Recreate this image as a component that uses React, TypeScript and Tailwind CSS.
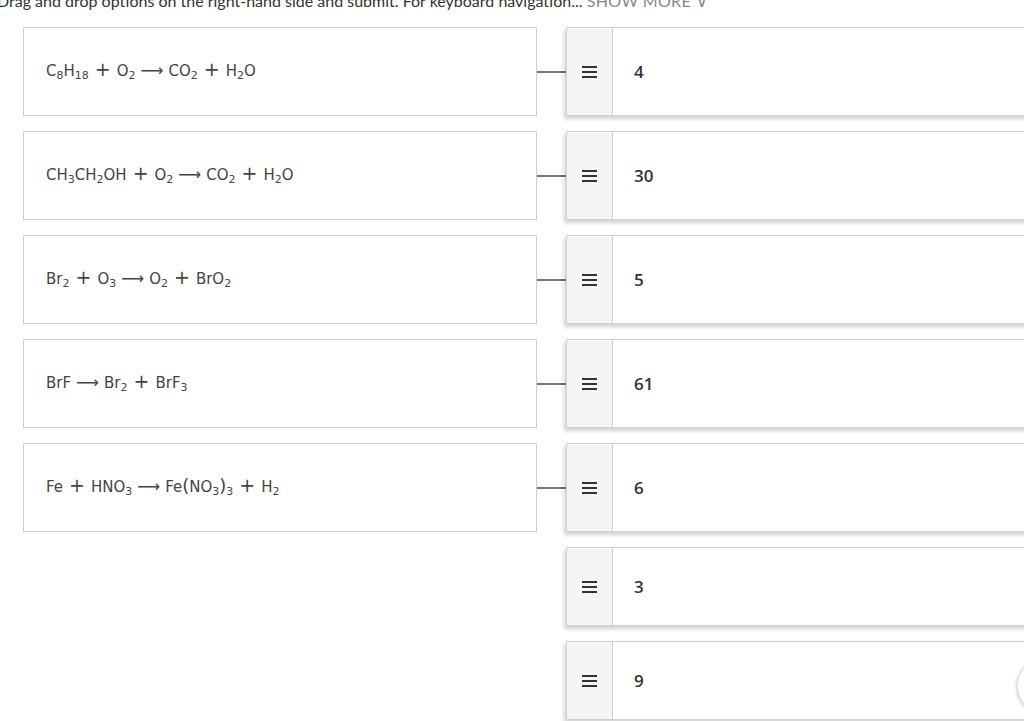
import React from 'react';

type Part = string | { sub: string } | { op: string };

const plus = { op: '+' };
const arrow = { op: '→' };

const equations: Part[][] = [
  ['C', { sub: '8' }, 'H', { sub: '18' }, plus, 'O', { sub: '2' }, arrow, 'CO', { sub: '2' }, plus, 'H', { sub: '2' }, 'O'],
  ['CH', { sub: '3' }, 'CH', { sub: '2' }, 'OH', plus, 'O', { sub: '2' }, arrow, 'CO', { sub: '2' }, plus, 'H', { sub: '2' }, 'O'],
  ['Br', { sub: '2' }, plus, 'O', { sub: '3' }, arrow, 'O', { sub: '2' }, plus, 'BrO', { sub: '2' }],
  ['BrF', arrow, 'Br', { sub: '2' }, plus, 'BrF', { sub: '3' }],
  ['Fe', plus, 'HNO', { sub: '3' }, arrow, 'Fe', { op: '(' }, 'NO', { sub: '3' }, { op: ')' }, { sub: '3' }, plus, 'H', { sub: '2' }],
];

const answers = ['4', '30', '5', '61', '6', '3', '9'];

const Formula: React.FC<{ parts: Part[] }> = ({ parts }) => (
  <span className="whitespace-pre flex items-baseline">
    {parts.map((p, i) => {
      if (typeof p === 'string') return <span key={i}>{p}</span>;
      if ('sub' in p)
        return (
          <sub key={i} className="text-[11px]">
            {p.sub}
          </sub>
        );
      if (p.op === '+')
        return (
          <span key={i} className="mx-[6px] text-[19px] leading-none">
            +
          </span>
        );
      if (p.op === '→')
        return (
          <span key={i} className="mx-[5px] text-[16px] leading-none">
            ⟶
          </span>
        );
      return (
        <span key={i} className="text-[18px] leading-none">
          {p.op}
        </span>
      );
    })}
  </span>
);

const Handle: React.FC = () => (
  <div className="w-[46px] flex items-center justify-center bg-[#f5f5f5] border-r border-[#d0d0d0]">
    <div className="flex flex-col gap-[3px]">
      <span className="block w-[15px] h-[2px] bg-[#333]" />
      <span className="block w-[15px] h-[2px] bg-[#333]" />
      <span className="block w-[15px] h-[2px] bg-[#333]" />
    </div>
  </div>
);

const AnswerCard: React.FC<{ value: string; tall?: boolean }> = ({ value, tall }) => (
  <div
    className={
      'flex w-[500px] shrink-0 bg-white border border-[#d0d0d0] shadow-[-2px_3px_4px_rgba(0,0,0,0.18)] ' +
      (tall ? 'h-[89px]' : 'h-[79px]')
    }
  >
    <Handle />
    <div className="flex items-center pl-[21px] text-[17px] font-semibold text-[#333] font-['Open_Sans',sans-serif]">
      {value}
    </div>
  </div>
);

const App: React.FC = () => {
  return (
    <div className="relative w-[1024px] h-[721px] overflow-hidden bg-white">
      <div className="ml-[-3px] mt-[-9px] h-[36px] leading-[20px] text-[16px] text-[#333] font-['Lato',sans-serif] whitespace-nowrap">
        Drag and drop options on the right-hand side and submit. For keyboard navigation...{' '}
        <span className="text-[#888] tracking-wide">SHOW MORE ∨</span>
      </div>

      <div className="flex flex-col gap-[15px] pl-[23px]">
        {equations.map((eq, i) => (
          <div key={i} className="flex items-stretch">
            <div className="w-[514px] h-[89px] shrink-0 flex items-center pl-[22px] border border-[#cfcfcf] bg-white text-[15px] text-[#444] font-['DejaVu_Sans',sans-serif]">
              <Formula parts={eq} />
            </div>
            <div className="w-[29px] shrink-0 flex items-center">
              <span className="block w-full h-[2px] bg-[#777]" />
            </div>
            <AnswerCard value={answers[i]} tall />
          </div>
        ))}
        {answers.slice(5).map((a) => (
          <div key={a} className="flex">
            <div className="w-[543px] shrink-0" />
            <AnswerCard value={a} />
          </div>
        ))}
      </div>

      <div className="absolute left-[1017px] top-[658px] w-[56px] h-[56px] rounded-full bg-white border border-[#e0e0e0] shadow-[0_1px_4px_rgba(0,0,0,0.25)]" />
    </div>
  );
};

export default App;
